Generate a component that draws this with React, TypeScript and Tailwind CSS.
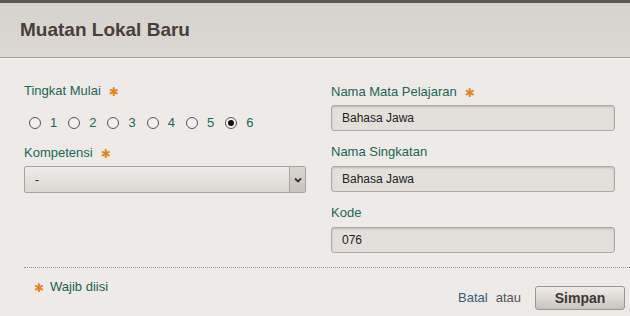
import { useState } from "react"

function Star({ className = "" }: { className?: string }) {
  return (
    <span className={"font-['DejaVu_Sans',sans-serif] text-[12px] font-bold leading-none text-[#e0861a] " + className}>
      ✱
    </span>
  )
}

function Label({ text, required }: { text: string; required?: boolean }) {
  return (
    <div className="flex h-4 items-center text-[13px] leading-4 text-[#226656]">
      <span>{text}</span>
      {required && <Star className="ml-[8px] mt-px" />}
    </div>
  )
}

function Field({ value }: { value: string }) {
  return (
    <div className="flex h-[26px] items-center rounded-[3px] border border-[#b0aaa4] bg-[#e3dfdb] px-[10px] text-[12px] text-[#222] shadow-[inset_0_1px_2px_rgba(0,0,0,0.18)]">
      {value}
    </div>
  )
}

function Radio({ n, checked, onPick }: { n: number; checked: boolean; onPick: () => void }) {
  return (
    <button onClick={onPick} className="flex items-center gap-[9px] text-[13px] leading-4 text-[#226656]">
      <span className="flex h-[12px] w-[12px] items-center justify-center rounded-full border border-[#555] bg-[#f2f0ee]">
        {checked && <span className="h-[6px] w-[6px] rounded-full bg-[#111]" />}
      </span>
      <span>{n}</span>
    </button>
  )
}

export default function App() {
  const [level, setLevel] = useState(6)

  return (
    <div className="h-[316px] w-[630px] overflow-hidden bg-[#edeae7] font-['Liberation_Sans',Arial,sans-serif]">
      <div className="h-[3px] bg-[#5b5855]" />
      <div className="flex h-[55px] items-center border-b border-[#a69c95] bg-gradient-to-b from-[#d6d2ce] to-[#dcd8d4] pl-[20px] shadow-[0_1px_0_#f6f4f2]">
        <h1 className="text-[19px] font-bold text-[#4a3f38]">Muatan Lokal Baru</h1>
      </div>

      <div className="grid grid-cols-[282px_284px] gap-x-[25px] pl-[24px] pt-[25px]">
        {/* left column */}
        <div className="flex flex-col">
          <Label text="Tingkat Mulai" required />
          <div className="mt-4 flex gap-[11px] pl-[5px]">
            {[1, 2, 3, 4, 5, 6].map((n) => (
              <Radio key={n} n={n} checked={level === n} onPick={() => setLevel(n)} />
            ))}
          </div>
          <div className="mt-[14px]">
            <Label text="Kompetensi" required />
          </div>
          <div className="mt-[5px] flex h-[27px] rounded-[2px] border border-[#a9a39e] bg-gradient-to-b from-[#eeebe8] to-[#dcd8d4]">
            <div className="flex flex-1 items-center px-[10px] text-[12px] text-[#222]">-</div>
            <div className="flex w-[16px] items-center justify-center border-l border-[#a9a39e] bg-gradient-to-b from-[#d9d5d1] to-[#c8c3bf]">
              <svg width="8" height="6" viewBox="0 0 8 6">
                <path d="M1 1.5 L4 4.5 L7 1.5" fill="none" stroke="#333" strokeWidth="1.8" />
              </svg>
            </div>
          </div>
        </div>

        {/* right column */}
        <div className="flex flex-col">
          <div className="mt-px">
            <Label text="Nama Mata Pelajaran" required />
          </div>
          <div className="mt-[5px]">
            <Field value="Bahasa Jawa" />
          </div>
          <div className="mt-[13px]">
            <Label text="Nama Singkatan" />
          </div>
          <div className="mt-[6px]">
            <Field value="Bahasa Jawa" />
          </div>
          <div className="mt-[13px]">
            <Label text="Kode" />
          </div>
          <div className="mt-[6px]">
            <Field value="076" />
          </div>
        </div>
      </div>

      <div className="ml-[24px] mt-[14px] border-t border-dotted border-[#9a948f]" />

      <div className="flex items-start justify-between pl-[34px] pr-[5px]">
        <div className="mt-[11px] flex items-center text-[13px] leading-4 text-[#1f5e50]">
          <Star className="mr-[6px] mt-px" />
          <span>Wajib diisi</span>
        </div>
        <div className="mt-[18px] flex items-center">
          <a className="text-[13px] text-[#355c78]">Batal</a>
          <span className="ml-[8px] text-[13px] text-[#555]">atau</span>
          <button className="ml-[14px] flex h-[24px] w-[90px] items-center justify-center rounded-[3px] border border-[#9b958f] bg-gradient-to-b from-[#efece9] to-[#c9c4bf] text-[14px] font-bold text-[#3d3833]">
            Simpan
          </button>
        </div>
      </div>
    </div>
  )
}
